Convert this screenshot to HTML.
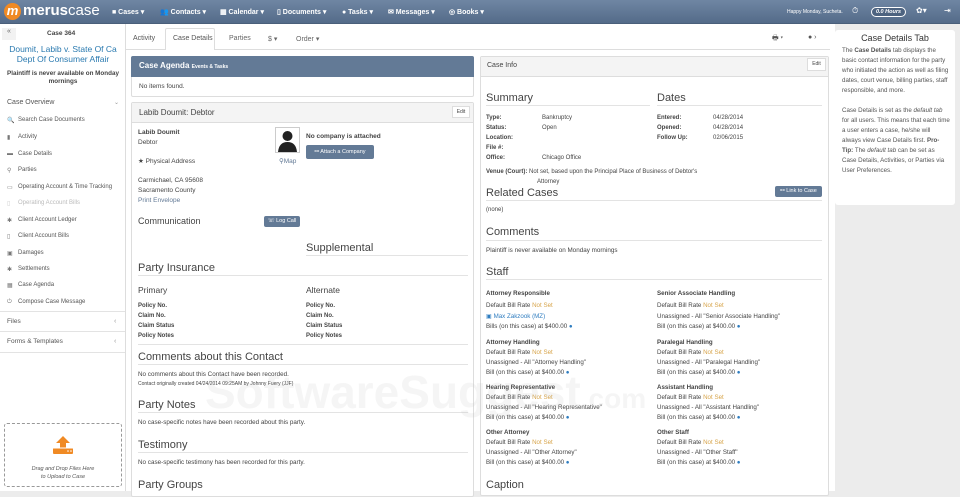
<!DOCTYPE html>
<html><head><meta charset="utf-8"><style>
*{margin:0;padding:0;box-sizing:border-box}
body{width:960px;height:491px;overflow:hidden;font-family:"Liberation Sans",sans-serif;background:#ececec;color:#444;font-size:7px;position:relative}
.a{position:absolute;white-space:nowrap}
.top{position:absolute;left:0;top:0;width:960px;height:24px;background:linear-gradient(#6f86a3,#546b89);border-bottom:1px solid #4a5f7a}
.nav{color:#fff;font-weight:bold;font-size:7px;top:8px}
.side{position:absolute;left:0;top:24px;width:126px;height:467px;background:#fff;border-right:1px solid #ddd}
.si{left:18px;font-size:6px;color:#555}
.ic{left:7px;font-size:6px;color:#777}
.hr{position:absolute;height:1px;background:#e3e3e3}
.pan{position:absolute;background:#fff;border:1px solid #ddd;border-radius:2px}
.h{font-size:11px;color:#444;font-weight:normal}
.b{font-weight:bold;color:#444}
.btn{position:absolute;background:#637a96;color:#fff;border-radius:2px;font-size:5.5px;text-align:center}
.ns{color:#d7a44a}
.i{color:#2f7dc0}
</style></head><body>
<div class="top"></div>
<div class="a" style="left:4px;top:3px;width:17px;height:17px;border-radius:50%;background:#f08a24;color:#fff;font-size:13px;font-style:italic;text-align:center;line-height:16px;font-weight:bold">m</div>
<div class="a" style="left:23px;top:2px;color:#fff;font-size:15px"><b>merus</b>case</div>
<div class="a nav" style="left:112px">■ Cases ▾</div>
<div class="a nav" style="left:160px">👥 Contacts ▾</div>
<div class="a nav" style="left:220px">▦ Calendar ▾</div>
<div class="a nav" style="left:277px">▯ Documents ▾</div>
<div class="a nav" style="left:342px">● Tasks ▾</div>
<div class="a nav" style="left:388px">✉ Messages ▾</div>
<div class="a nav" style="left:449px">◎ Books ▾</div>
<div class="a" style="left:787px;top:9px;color:#fff;font-size:5px">Happy Monday, Sucheta.</div>
<div class="a" style="left:852px;top:6px;color:#fff;font-size:8px">⏱</div>
<div class="a" style="left:871px;top:7px;width:35px;height:10px;border:1px solid #fff;border-radius:5px;color:#fff;font-size:5.5px;font-style:italic;font-weight:bold;text-align:center;line-height:8px;background:#4d6380">0.0 Hours</div>
<div class="a" style="left:916px;top:6px;color:#fff;font-size:8px">✿▾</div>
<div class="a" style="left:944px;top:6px;color:#fff;font-size:8px">⇥</div>

<div class="side"></div>
<div class="a" style="left:2px;top:28px;width:14px;height:12px;background:#f2f2f2;font-size:7px;text-align:center;color:#666">«</div>
<div class="a b" style="left:47px;top:30px;font-size:6.5px">Case 364</div>
<div class="a" style="left:3px;top:44px;width:120px;text-align:center;color:#2a7ab0;font-size:8.5px;white-space:normal;line-height:10px">Doumit, Labib v. State Of Ca Dept Of Consumer Affair</div>
<div class="a b" style="left:3px;top:70px;width:120px;text-align:center;font-size:6.3px;white-space:normal;line-height:7.5px">Plaintiff is never available on Monday mornings</div>
<div class="a" style="left:7px;top:99px;font-size:7px;color:#555">Case Overview</div><div class="a" style="left:114px;top:99px;font-size:6px;color:#999">⌄</div>
<div class="a ic" style="top:117px">🔍</div><div class="a si" style="top:117px">Search Case Documents</div>
<div class="a ic" style="top:134px">▮</div><div class="a si" style="top:134px">Activity</div>
<div class="a ic" style="top:151px">▬</div><div class="a si" style="top:151px">Case Details</div>
<div class="a ic" style="top:167px">⚲</div><div class="a si" style="top:167px">Parties</div>
<div class="a ic" style="top:184px">▭</div><div class="a si" style="top:184px">Operating Account &amp; Time Tracking</div>
<div class="a ic" style="top:200px;color:#ccc">▯</div><div class="a si" style="top:200px;color:#bbb">Operating Account Bills</div>
<div class="a ic" style="top:217px">✱</div><div class="a si" style="top:217px">Client Account Ledger</div>
<div class="a ic" style="top:233px">▯</div><div class="a si" style="top:233px">Client Account Bills</div>
<div class="a ic" style="top:250px">▣</div><div class="a si" style="top:250px">Damages</div>
<div class="a ic" style="top:266px">✱</div><div class="a si" style="top:266px">Settlements</div>
<div class="a ic" style="top:282px">▦</div><div class="a si" style="top:282px">Case Agenda</div>
<div class="a ic" style="top:299px">⏻</div><div class="a si" style="top:299px">Compose Case Message</div>
<div class="hr" style="left:0;top:311px;width:125px"></div>
<div class="a" style="left:7px;top:318px;font-size:6.5px;color:#555">Files</div><div class="a" style="left:114px;top:318px;color:#999">‹</div>
<div class="hr" style="left:0;top:331px;width:125px"></div>
<div class="a" style="left:7px;top:338px;font-size:6.5px;color:#555">Forms &amp; Templates</div><div class="a" style="left:114px;top:338px;color:#999">‹</div>
<div class="hr" style="left:0;top:352px;width:125px"></div>
<div class="a" style="left:4px;top:423px;width:118px;height:64px;border:1px dashed #999;border-radius:3px;background:#fff"></div>
<div class="a" style="left:51px;top:436px;width:24px;height:18px">
<svg width="24" height="18"><path d="M12 0 L5 7 H9 V12 H15 V7 H19 Z" fill="#f08a24"/><rect x="2" y="12" width="20" height="6" rx="1" fill="#f08a24"/><path d="M0 12 H24" stroke="#fff" stroke-width="1"/><circle cx="17" cy="15" r=".8" fill="#fff"/><circle cx="20" cy="15" r=".8" fill="#fff"/></svg></div>
<div class="a" style="left:4px;top:465px;width:118px;text-align:center;font-size:5.5px;font-style:italic;color:#555;line-height:8px;white-space:normal">Drag and Drop Files Here<br>to Upload to Case</div>

<!-- tabs -->
<div class="a" style="left:126px;top:24px;width:709px;height:467px;background:#fff"></div>
<div class="hr" style="left:126px;top:49px;width:704px;background:#ddd"></div>
<div class="a" style="left:165px;top:28px;width:50px;height:22px;background:#fff;border:1px solid #ddd;border-bottom:none;border-radius:2px 2px 0 0"></div>
<div class="a" style="left:133px;top:35px;font-size:7px;color:#555">Activity</div>
<div class="a" style="left:173px;top:35px;font-size:7px;color:#555">Case Details</div>
<div class="a" style="left:229px;top:35px;font-size:7px;color:#666">Parties</div>
<div class="a" style="left:268px;top:35px;font-size:7px;color:#666">$ ▾</div>
<div class="a" style="left:296px;top:35px;font-size:7px;color:#666">Order ▾</div>
<div class="a" style="left:772px;top:34px;font-size:7px;color:#555">🖶 ▾</div>
<div class="a" style="left:808px;top:34px;font-size:7px;color:#555">● ›</div>

<!-- case agenda -->
<div class="pan" style="left:131px;top:56px;width:343px;height:41px"></div>
<div class="a" style="left:131px;top:56px;width:343px;height:21px;background:#637a96;border-radius:2px 2px 0 0"></div>
<div class="a" style="left:139px;top:61px;color:#fff;font-size:8px;font-weight:bold">Case Agenda <span style="font-size:5px">Events &amp; Tasks</span></div>
<div class="a" style="left:139px;top:83px;font-size:6.5px">No items found.</div>

<!-- Labib -->
<div class="pan" style="left:131px;top:102px;width:343px;height:395px"></div>
<div class="a" style="left:132px;top:103px;width:341px;height:20px;background:#f4f4f4;border-bottom:1px solid #ddd"></div>
<div class="a" style="left:139px;top:108px;font-size:8px;color:#444">Labib Doumit: Debtor</div>
<div class="a" style="left:452px;top:106px;width:18px;height:12px;background:#fff;border:1px solid #ddd;font-size:5px;text-align:center;line-height:10px">Edit</div>
<div class="a b" style="left:138px;top:129px;font-size:6.5px">Labib Doumit</div>
<div class="a" style="left:138px;top:139px;font-size:6.5px">Debtor</div>
<div class="a" style="left:138px;top:157px;font-size:6.5px">★ Physical Address</div>
<div class="a" style="left:279px;top:157px;font-size:6.5px;color:#637a96">⚲Map</div>
<div class="a" style="left:275px;top:127px;width:25px;height:26px;border:1px solid #ccc;background:#fff"><svg width="23" height="24"><circle cx="11.5" cy="8" r="5" fill="#222"/><path d="M2 24 Q3 14 11.5 14 Q20 14 21 24Z" fill="#222"/></svg></div>
<div class="a b" style="left:306px;top:133px;font-size:6.5px">No company is attached</div>
<div class="btn" style="left:306px;top:145px;width:68px;height:14px;line-height:14px">⚯ Attach a Company</div>
<div class="a" style="left:138px;top:177px;font-size:6.5px">Carmichael, CA 95608</div>
<div class="a" style="left:138px;top:187px;font-size:6.5px">Sacramento County</div>
<div class="a" style="left:138px;top:197px;font-size:6.5px;color:#637a96">Print Envelope</div>
<div class="a" style="left:138px;top:216px;font-size:9px">Communication</div>
<div class="btn" style="left:264px;top:216px;width:36px;height:11px;line-height:11px">☏ Log Call</div>
<div class="a h" style="left:306px;top:242px">Supplemental</div>
<div class="hr" style="left:306px;top:255px;width:162px"></div>
<div class="a h" style="left:138px;top:262px">Party Insurance</div>
<div class="hr" style="left:138px;top:275px;width:330px"></div>
<div class="a" style="left:138px;top:285px;font-size:8.5px">Primary</div>
<div class="a" style="left:306px;top:285px;font-size:8.5px">Alternate</div>
<div class="a b" style="left:138px;top:301px;font-size:6px;line-height:10px">Policy No.<br>Claim No.<br>Claim Status<br>Policy Notes</div>
<div class="a b" style="left:306px;top:301px;font-size:6px;line-height:10px">Policy No.<br>Claim No.<br>Claim Status<br>Policy Notes</div>
<div class="hr" style="left:138px;top:344px;width:330px"></div>
<div class="a h" style="left:138px;top:351px">Comments about this Contact</div>
<div class="hr" style="left:138px;top:364px;width:330px"></div>
<div class="a" style="left:138px;top:371px;font-size:6.3px">No comments about this Contact have been recorded.</div>
<div class="a" style="left:138px;top:381px;font-size:5px">Contact originally created 04/24/2014 09:25AM by Johnny Fuery (JJF)</div>
<div class="a h" style="left:138px;top:399px">Party Notes</div>
<div class="hr" style="left:138px;top:412px;width:330px"></div>
<div class="a" style="left:138px;top:419px;font-size:6.3px">No case-specific notes have been recorded about this party.</div>
<div class="a h" style="left:138px;top:439px">Testimony</div>
<div class="hr" style="left:138px;top:452px;width:330px"></div>
<div class="a" style="left:138px;top:459px;font-size:6.3px">No case-specific testimony has been recorded for this party.</div>
<div class="a h" style="left:138px;top:479px">Party Groups</div>

<!-- Case info -->
<div class="pan" style="left:480px;top:56px;width:349px;height:440px"></div>
<div class="a" style="left:481px;top:57px;width:347px;height:20px;background:#f4f4f4;border-bottom:1px solid #ddd"></div>
<div class="a" style="left:487px;top:62px;font-size:7px">Case Info</div>
<div class="a" style="left:807px;top:58px;width:19px;height:13px;background:#fff;border:1px solid #ddd;font-size:5px;text-align:center;line-height:11px">Edit</div>
<div class="a h" style="left:486px;top:92px">Summary</div>
<div class="hr" style="left:486px;top:105px;width:164px"></div>
<div class="a h" style="left:657px;top:92px">Dates</div>
<div class="hr" style="left:657px;top:105px;width:165px"></div>
<div class="a b" style="left:486px;top:113px;font-size:6px;line-height:10px">Type:<br>Status:<br>Location:<br>File #:<br>Office:</div>
<div class="a" style="left:542px;top:113px;font-size:6px;line-height:10px">Bankruptcy<br>Open<br><br><br>Chicago Office</div>
<div class="a b" style="left:657px;top:113px;font-size:6px;line-height:10px">Entered:<br>Opened:<br>Follow Up:</div>
<div class="a" style="left:713px;top:113px;font-size:6px;line-height:10px">04/28/2014<br>04/28/2014<br>02/06/2015</div>
<div class="a" style="left:486px;top:167px;font-size:6px;line-height:10px"><b>Venue (Court):</b> Not set, based upon the Principal Place of Business of Debtor's<br><span style="padding-left:51px">Attorney</span></div>
<div class="a h" style="left:486px;top:187px">Related Cases</div>
<div class="btn" style="left:775px;top:186px;width:47px;height:11px;line-height:11px">⚯ Link to Case</div>
<div class="hr" style="left:486px;top:200px;width:336px"></div>
<div class="a" style="left:486px;top:207px;font-size:6px">(none)</div>
<div class="a h" style="left:486px;top:226px">Comments</div>
<div class="hr" style="left:486px;top:240px;width:336px"></div>
<div class="a" style="left:486px;top:247px;font-size:6.3px">Plaintiff is never available on Monday mornings</div>
<div class="a h" style="left:486px;top:266px">Staff</div>
<div class="hr" style="left:486px;top:279px;width:336px"></div>
<div class="a" style="left:486px;top:289px;font-size:6.2px;line-height:10px;white-space:nowrap">
<b>Attorney Responsible</b><br><span style="line-height:13px">Default Bill Rate <span class="ns">Not Set</span></span><br><span class="i">▣ Max Zakzook (MZ)</span><br>Bills (on this case) at $400.00 <span class="i">●</span><br>
<div style="height:6px"></div><b>Attorney Handling</b><br>Default Bill Rate <span class="ns">Not Set</span><br>Unassigned - All "Attorney Handling"<br>Bill (on this case) at $400.00 <span class="i">●</span><br>
<div style="height:5px"></div><b>Hearing Representative</b><br>Default Bill Rate <span class="ns">Not Set</span><br>Unassigned - All "Hearing Representative"<br>Bill (on this case) at $400.00 <span class="i">●</span><br>
<div style="height:5px"></div><b>Other Attorney</b><br>Default Bill Rate <span class="ns">Not Set</span><br>Unassigned - All "Other Attorney"<br>Bill (on this case) at $400.00 <span class="i">●</span></div>
<div class="a" style="left:657px;top:289px;font-size:6.2px;line-height:10px;white-space:nowrap">
<b>Senior Associate Handling</b><br><span style="line-height:13px">Default Bill Rate <span class="ns">Not Set</span></span><br>Unassigned - All "Senior Associate Handling"<br>Bill (on this case) at $400.00 <span class="i">●</span><br>
<div style="height:6px"></div><b>Paralegal Handling</b><br>Default Bill Rate <span class="ns">Not Set</span><br>Unassigned - All "Paralegal Handling"<br>Bill (on this case) at $400.00 <span class="i">●</span><br>
<div style="height:5px"></div><b>Assistant Handling</b><br>Default Bill Rate <span class="ns">Not Set</span><br>Unassigned - All "Assistant Handling"<br>Bill (on this case) at $400.00 <span class="i">●</span><br>
<div style="height:5px"></div><b>Other Staff</b><br>Default Bill Rate <span class="ns">Not Set</span><br>Unassigned - All "Other Staff"<br>Bill (on this case) at $400.00 <span class="i">●</span></div>
<div class="a h" style="left:486px;top:479px">Caption</div>

<!-- watermark -->
<div class="a" style="left:205px;top:365px;font-size:46px;font-weight:bold;color:rgba(190,190,190,.15)">SoftwareSuggest<span style="font-size:28px">.com</span></div>

<!-- help -->
<div class="a" style="left:835px;top:30px;width:120px;height:175px;background:#fff;border-radius:3px"></div>
<div class="a" style="left:835px;top:33px;width:120px;text-align:center;font-size:9px;color:#333">Case Details Tab</div>
<div class="a" style="left:842px;top:46px;width:108px;font-size:6.2px;line-height:10px;white-space:normal;color:#555">The <b>Case Details</b> tab displays the basic contact information for the party who initiated the action as well as filing dates, court venue, billing parties, staff responsible, and more.<br><br>Case Details is set as the <i>default tab</i> for all users. This means that each time a user enters a case, he/she will always view Case Details first. <b>Pro-Tip:</b> The <i>default tab</i> can be set as Case Details, Activities, or Parties via User Preferences.</div>
</body></html>
